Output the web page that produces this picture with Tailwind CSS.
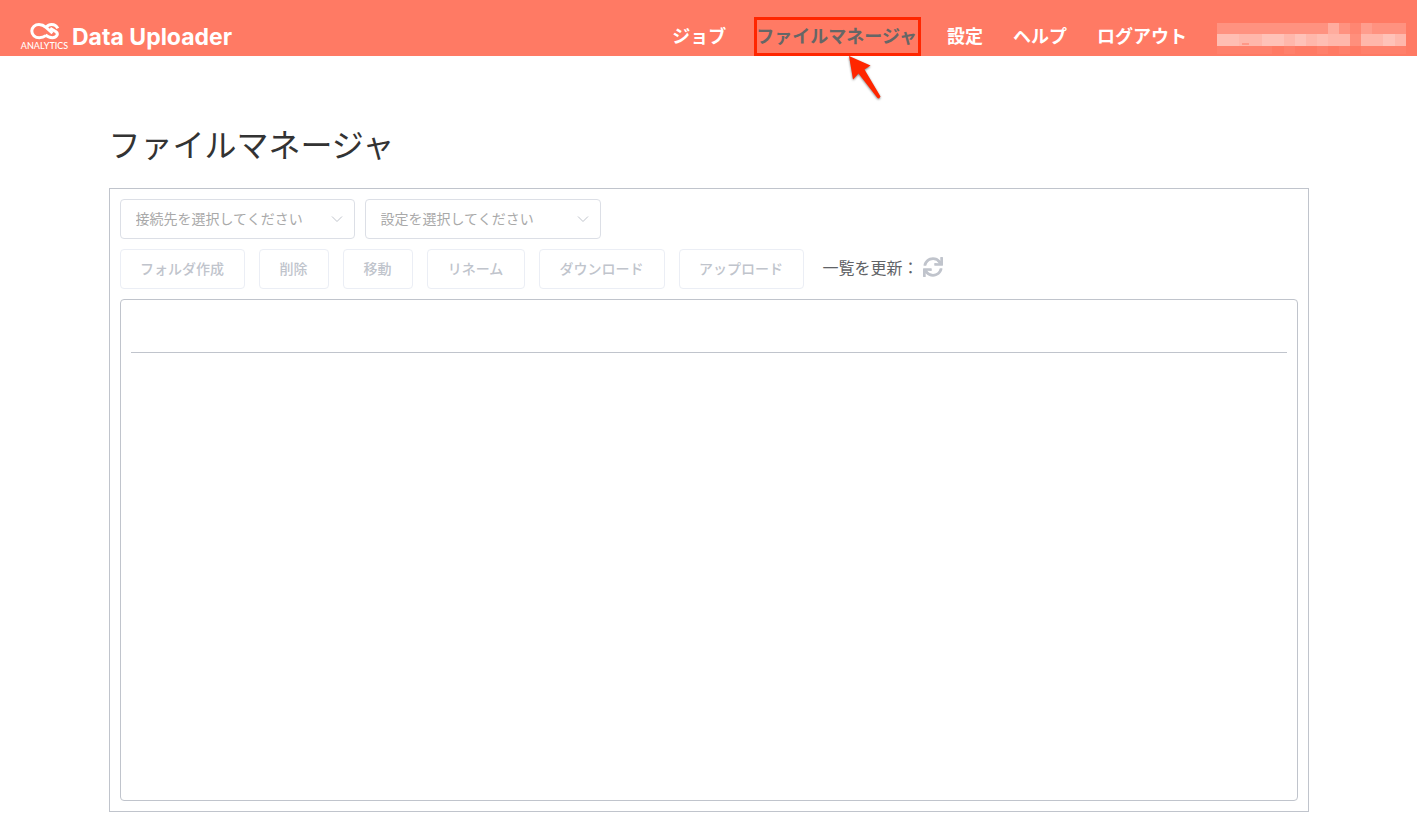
<!DOCTYPE html>
<html lang="ja">
<head>
<meta charset="utf-8">
<meta name="viewport" content="width=device-width, initial-scale=1">
<title>Data Uploader</title>
<script src="https://cdn.jsdelivr.net/npm/@tailwindcss/browser@4"></script>
</head>
<body class="bg-white font-['Liberation_Sans','Noto_Sans_CJK_JP',sans-serif] text-[#333333]">
<header class="flex h-14 items-center justify-between bg-[#ff7a64] pr-[11px] pl-[21px] text-white">
  <a href="#" class="flex items-center gap-1">
    <span class="flex w-[47px] flex-col items-center pt-[18px]">
      <svg class="h-[18px] w-[30px]" viewBox="0 0 30 18" fill="none" stroke="currentColor" stroke-width="3" stroke-linejoin="round" aria-hidden="true">
        <path d="M15.800 13.600C14 15 12 15.700 9.300 15.700C5 15.700 1.800 12.900 1.800 9.100C1.800 5.300 5 2.500 9 2.500C12.200 2.500 14 3.600 16 5.400L22.500 11.200"/>
        <path d="M16.400 5C17.800 3.200 19.400 2.400 21.600 2.400C24.400 2.400 26.600 3.800 27.800 6.400"/>
        <path d="M20.200 6.200L26 9.800C28.800 12 26.600 15.700 22.400 15.700C19.600 15.700 17.400 14.800 15.400 12.800"/>
      </svg>
      <span class="font-[Lato] text-[9px] leading-[12px] font-medium">ANALYTICS</span>
    </span>
    <span class="pt-[18px] font-[Inter] text-[23px] leading-8 font-bold">Data Uploader</span>
  </a>
  <nav class="flex items-center gap-[30px] pt-[17px] text-lg leading-6 font-bold whitespace-nowrap">
    <a href="#">ジョブ</a>
    <a href="#" aria-current="page" class="relative text-[#666666]">ファイルマネージャ
      <span class="absolute -right-1 -left-[2px] -top-[8px] -bottom-[7px] border-3 border-[#ff2600]"></span>
      <svg class="absolute top-[30px] left-[89px] h-12 w-10 drop-shadow-[0_1px_1px_rgba(0,0,0,0.5)]" viewBox="0 0 40 48" fill="#ff2600" aria-hidden="true"><path d="M4 1L25.500 10.500L19.500 14.500L35.500 41.500L34 43.500L32.500 43L13.500 18.500L8 24.500Z"/></svg>
    </a>
    <a href="#">設定</a>
    <a href="#">ヘルプ</a>
    <a href="#">ログアウト</a>
    <svg class="-ml-px h-[34px] w-[190px]" viewBox="0 0 190 34" fill="#fff" shape-rendering="crispEdges" aria-hidden="true">
      <path fill-opacity=".18" d="M1 3h189v11H1z"/>
      <path fill-opacity=".46" d="M1 14h133v12H1zM145 14h45v12h-45z"/>
      <path fill-opacity=".16" d="M134 14h11v12h-11zM46 14h22v12H46zM112 3h11v11h-11zM79 14h11v12H79zM167 14h12v12h-12z"/>
      <path fill-opacity=".1" d="M112 3h11v11h-11zM145 3h11v11h-11zM1 14h22v12H1zM101 14h11v12h-11z"/>
      <path fill="#ff7a64" fill-opacity=".5" d="M26 23h7v2h-7zM134 3h11v11h-11z"/>
      <path fill-opacity=".05" d="M1 26h55v8H1zM68 26h11v8H68zM101 26h11v8h-11zM123 26h11v8h-11zM145 26h45v8h-45z"/>
    </svg>
  </nav>
</header>
<main class="mx-auto max-w-[1200px] pt-[66px]">
  <h1 class="text-[32px] leading-[48px]">ファイルマネージャ</h1>
  <section class="mt-[18px] border border-[#c0c4cc] p-[10px]">
    <div class="flex gap-[10px]">
      <label class="relative">
        <select aria-label="接続先" class="h-10 w-[235px] appearance-none rounded border border-[#dcdfe6] bg-white px-[15px] text-sm text-[#a9a9a9]"><option>接続先を選択してください</option></select>
        <svg class="pointer-events-none absolute top-[14px] right-3 size-3" viewBox="0 0 12 12" fill="none" stroke="#c0c4cc" aria-hidden="true"><path d="M1 3.500L6 8.500L11 3.500"/></svg>
      </label>
      <label class="relative">
        <select aria-label="設定" class="h-10 w-[236px] appearance-none rounded border border-[#dcdfe6] bg-white px-[15px] text-sm text-[#a9a9a9]"><option>設定を選択してください</option></select>
        <svg class="pointer-events-none absolute top-[14px] right-3 size-3" viewBox="0 0 12 12" fill="none" stroke="#c0c4cc" aria-hidden="true"><path d="M1 3.500L6 8.500L11 3.500"/></svg>
      </label>
    </div>
    <div class="mt-[10px] flex items-center gap-[14px] text-sm font-medium text-[#c0c4cc]">
      <button disabled class="h-10 w-[125px] rounded border border-[#ebeef5]">フォルダ作成</button>
      <button disabled class="h-10 w-[70px] rounded border border-[#ebeef5]">削除</button>
      <button disabled class="h-10 w-[70px] rounded border border-[#ebeef5]">移動</button>
      <button disabled class="h-10 w-[98px] rounded border border-[#ebeef5]">リネーム</button>
      <button disabled class="h-10 w-[126px] rounded border border-[#ebeef5]">ダウンロード</button>
      <button disabled class="h-10 w-[125px] rounded border border-[#ebeef5]">アップロード</button>
      <div class="ml-[5px] flex items-start gap-1">
        <span class="text-base font-normal text-[#606266]">一覧を更新：</span>
        <button aria-label="一覧を更新"><svg class="block size-5" viewBox="0 0 512 512" fill="#c0c4cc" aria-hidden="true"><path d="M440.650 12.570l4 82.770A247.160 247.160 0 0 0 255.830 8C134.730 8 33.910 94.920 12.290 209.820A12 12 0 0 0 24.090 224h49.050a12 12 0 0 0 11.670-9.260 175.910 175.910 0 0 1 317-56.940l-101.460-4.860a12 12 0 0 0-12.570 12v47.410a12 12 0 0 0 12 12H500a12 12 0 0 0 12-12V12a12 12 0 0 0-12-12h-47.370a12 12 0 0 0-11.980 12.570zM255.830 432a175.610 175.610 0 0 1-146-77.800l101.800 4.870a12 12 0 0 0 12.570-12v-47.400a12 12 0 0 0-12-12H12a12 12 0 0 0-12 12V500a12 12 0 0 0 12 12h47.350a12 12 0 0 0 12-12.600l-4.150-82.570A247.170 247.170 0 0 0 255.830 504c121.110 0 221.930-86.920 243.550-201.820a12 12 0 0 0-11.800-14.180h-49.050a12 12 0 0 0-11.670 9.260A175.860 175.860 0 0 1 255.830 432z"/></svg></button>
      </div>
    </div>
    <div class="mt-[10px] min-h-[502px] rounded border border-[#c0c4cc] px-[10px]">
      <div class="h-[53px] border-b border-[#c0c4cc]"></div>
    </div>
  </section>
</main>
</body>
</html>
